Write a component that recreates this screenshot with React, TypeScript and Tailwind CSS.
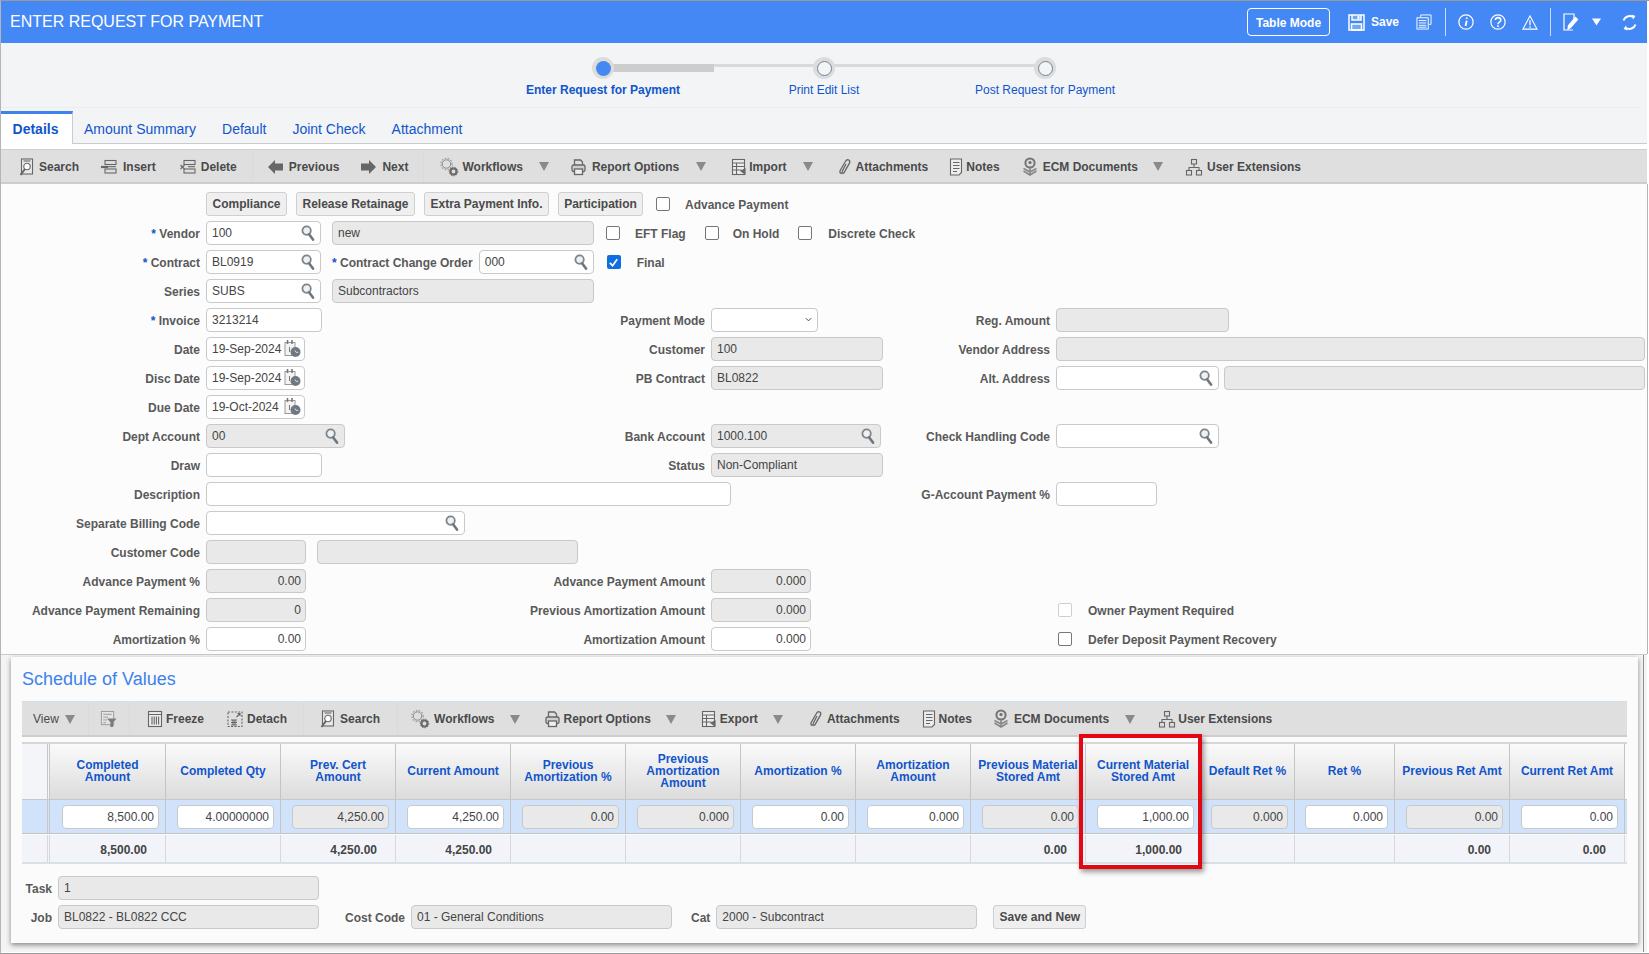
import React from 'react'

const FONT = "font-['Liberation_Sans',Arial,sans-serif]"

type IconProps = { className?: string }

const svg = (children: React.ReactNode, className = 'w-[18px] h-[18px]', stroke = '#666') => (
  <svg viewBox="0 0 18 18" fill="none" stroke={stroke} strokeWidth="1.1" className={`shrink-0 ${className}`}>
    {children}
  </svg>
)

const Magnifier = () => (
  <svg viewBox="0 0 14 16" className="w-[14px] h-[16px] shrink-0" fill="none">
    <circle cx="5.6" cy="5.6" r="4.2" stroke="#7d858c" strokeWidth="1.8" fill="#eef1f3" />
    <path d="M8.2 9.4 12 14.6" stroke="#6f777e" strokeWidth="2.6" strokeLinecap="round" />
  </svg>
)

const SearchIcon = () =>
  svg(
    <>
      <rect x="3.5" y="1" width="11" height="15" fill="#e9e9e9" />
      <path d="M5.5 3h7" />
      <circle cx="9" cy="8.5" r="3.2" fill="#fff" />
      <path d="M7 11 2.5 17" strokeWidth="2" />
    </>,
  )
const InsertIcon = () =>
  svg(
    <>
      <rect x="5" y="2.5" width="11" height="4" />
      <rect x="5" y="11" width="11" height="4" />
      <path d="M5 8.7h11" />
      <path d="M1 9h7" strokeWidth="2.2" />
    </>,
  )
const DeleteIcon = () =>
  svg(
    <>
      <rect x="5" y="2.5" width="11" height="4" />
      <rect x="5" y="11" width="11" height="4" />
      <path d="M9 8.7h7" />
      <path d="m1.5 7 4 4m0-4-4 4" />
    </>,
  )
const ArrowLeft = () => (
  <svg viewBox="0 0 15 14" className="w-[15px] h-[14px] shrink-0">
    <path d="M0 7 7 0v3.5h8v7H7V14z" fill="#666" />
  </svg>
)
const ArrowRight = () => (
  <svg viewBox="0 0 15 14" className="w-[15px] h-[14px] shrink-0">
    <path d="M15 7 8 0v3.5H0v7h8V14z" fill="#666" />
  </svg>
)
const GearsIcon = () => (
  <svg viewBox="0 0 20 20" className="w-[20px] h-[20px] shrink-0" fill="none">
    <circle cx="7.5" cy="7" r="4.2" stroke="#8b8b8b" strokeWidth="1" />
    <circle cx="7.5" cy="7" r="5.6" stroke="#a5a5a5" strokeWidth="1.4" strokeDasharray="1.6 1.4" />
    <circle cx="14.5" cy="14.5" r="3" stroke="#6b6b6b" strokeWidth="2.2" />
    <circle cx="14.5" cy="14.5" r="4.3" stroke="#6b6b6b" strokeWidth="1" strokeDasharray="1.4 1.2" />
  </svg>
)
const PrinterIcon = () => (
  <svg viewBox="0 0 15 18" className="w-[15px] h-[18px] shrink-0" fill="none" stroke="#666" strokeWidth="1.3">
    <path d="M3.5 7V2h6l2 2v3" />
    <rect x="1" y="7" width="13" height="6.5" rx="1.5" fill="#cfcfcf" />
    <rect x="3.5" y="11" width="8" height="5.5" fill="#efefef" />
  </svg>
)
const ImportIcon = () =>
  svg(
    <>
      <rect x="2.5" y="1.5" width="12" height="15" fill="#ececec" />
      <path d="M2.5 5h12M2.5 8.5h12M2.5 12h9M6.5 5v11" />
      <path d="m11 13 4-2v5z" fill="#666" />
    </>,
  )
const ExportIcon = ImportIcon
const ClipIcon = () =>
  svg(
    <path d="M5.5 15.5c-1.6 0-2-1.6-1.3-3l5.2-9c.8-1.5 2.2-2.2 3.4-1.5s1.2 2.2.4 3.7l-5 8.6c-.5.9-1.3 1.2-1.8.9-.6-.3-.6-1-.1-1.9L10 6" strokeWidth="1.3" />,
  )
const NotesIcon = () => (
  <svg viewBox="0 0 14 18" className="w-[14px] h-[18px] shrink-0" fill="none" stroke="#666" strokeWidth="1.1">
    <path d="M1.5 1h11v13.5L10 17H1.5z" fill="#ececec" />
    <path d="M4 4.5h6.5M4 7.5h6.5M4 10.5h6.5M4 13.5h4" />
  </svg>
)
const EcmIcon = () => (
  <svg viewBox="0 0 16 20" className="w-[16px] h-[20px] shrink-0" fill="none">
    <circle cx="8" cy="6" r="4.6" stroke="#757575" strokeWidth="2" fill="#dcdcdc" />
    <circle cx="8" cy="5.5" r="1.6" fill="#6e6e6e" />
    <path d="M8 11v7M1.5 11.5 8 15l6.5-3.5M1.5 14 8 18l6.5-4" stroke="#888" strokeWidth="1.6" />
  </svg>
)
const TreeIcon = () =>
  svg(
    <>
      <rect x="6.5" y="1.5" width="5" height="4.5" />
      <rect x="1.5" y="12.5" width="5" height="4.5" />
      <rect x="11.5" y="12.5" width="5" height="4.5" />
      <path d="M9 6v3.5M4 12.5v-3h10v3" />
    </>,
  )
const FilterIcon = () => (
  <svg viewBox="0 0 18 18" className="w-[17px] h-[18px] shrink-0" fill="none">
    <rect x="1.5" y="1" width="13" height="14" stroke="#999" fill="#e4e4e4" />
    <path d="M3.5 4h9M3.5 7h5M3.5 10h4M3.5 13h3" stroke="#999" />
    <path d="M7.5 8.5h10l-3.5 4v5h-3v-5z" fill="#7c7c7c" />
  </svg>
)
const FreezeIcon = () =>
  svg(
    <>
      <rect x="2.5" y="1.5" width="13" height="15" fill="#ececec" />
      <path d="M2.5 4.5h13M6 6.5v8M8.2 6.5v8M10.4 6.5v8M12.6 6.5v8" />
    </>,
  )
const DetachIcon = () =>
  svg(
    <>
      <rect x="2" y="2" width="14" height="14.5" strokeDasharray="2 1.4" />
      <path d="M5 10h6M5 12.5h6M5 15h6M7 10v5M9 10v5M10.5 7 14 3.5M11.5 3.5H14V6" />
    </>,
  )

const Caret = ({ className = '' }: IconProps) => (
  <svg viewBox="0 0 10 9" className={`w-[10px] h-[9px] shrink-0 ${className}`}>
    <path d="M0 0h10L5 9z" fill="#8a8a8a" />
  </svg>
)

const CalendarClock = () => (
  <svg viewBox="0 0 17 19" className="w-[17px] h-[19px] shrink-0" fill="none">
    <rect x="1" y="3.5" width="10" height="13" stroke="#9a9a9a" fill="#f3f3f3" />
    <path d="M3.5 1v4M8 1v4" stroke="#777" strokeWidth="1.6" />
    <path d="M5.5 8v5" stroke="#777" />
    <circle cx="11.5" cy="13" r="5" fill="#6f7880" />
    <path d="M11 11.5 12 13.3h2.3" stroke="#d9d9d9" />
  </svg>
)

const Label = ({ children, req, className = '' }: { children: React.ReactNode; req?: boolean; className?: string }) => (
  <label className={`block shrink-0 mt-[2px] text-right text-[12px] font-bold text-[#595959] whitespace-nowrap ${className}`}>
    {req ? <span className="text-[#1155cc]">* </span> : null}
    {children}
  </label>
)

const Txt = ({ children, className = '' }: { children: React.ReactNode; className?: string }) => (
  <span className={`mt-[2px] text-[12px] font-bold text-[#595959] whitespace-nowrap ${className}`}>{children}</span>
)

const Field = ({
  className = '',
  value = '',
  gray,
  right,
  search,
  date,
}: {
  className?: string
  value?: string
  gray?: boolean
  right?: boolean
  search?: boolean
  date?: boolean
}) => (
  <div
    className={`h-[24px] shrink-0 border border-[#c9c9c9] rounded-[4px] flex items-center text-[12px] text-[#444] whitespace-nowrap ${
      gray ? 'bg-[#e9e9e9]' : 'bg-white'
    } ${right ? 'justify-end pl-[5px] pr-[4px]' : 'justify-between px-[5px]'} ${className}`}
  >
    <span>{value}</span>
    {search ? <Magnifier /> : null}
    {date ? <CalendarClock /> : null}
  </div>
)

const Check = ({ checked, faint, className = '' }: { checked?: boolean; faint?: boolean; className?: string }) =>
  checked ? (
    <div className={`w-[14px] h-[14px] mt-[1px] shrink-0 rounded-[2px] bg-[#0f6fe0] flex items-center justify-center ${className}`}>
      <svg viewBox="0 0 12 12" className="w-[11px] h-[11px]" fill="none">
        <path d="M2 6.5 5 9.5 10 2.5" stroke="#fff" strokeWidth="1.9" />
      </svg>
    </div>
  ) : (
    <div
      className={`w-[14px] h-[14px] mt-[1px] shrink-0 rounded-[2px] bg-white border ${
        faint ? 'border-[#cfcfcf]' : 'border-[#767676]'
      } ${className}`}
    />
  )

const Btn = ({ children, className = '' }: { children: React.ReactNode; className?: string }) => (
  <div
    className={`h-[24px] flex items-center justify-center shrink-0 rounded-[3px] border border-[#cfcfcf] bg-[#efefef] text-[12px] font-bold text-[#4a4a4a] whitespace-nowrap ${className}`}
  >
    {children}
  </div>
)

const Item = ({
  icon,
  text,
  className = '',
  gap = 'gap-[5px]',
}: {
  icon?: React.ReactNode
  text: string
  className?: string
  gap?: string
}) => (
  <div className={`flex items-center shrink-0 ${gap} ${className}`}>
    {icon}
    <span className="text-[12px] font-bold text-[#4a4a4a] whitespace-nowrap">{text}</span>
  </div>
)

const Row = ({ children }: { children: React.ReactNode }) => (
  <div className="grid grid-cols-[520px_395px_1fr] h-[29px] items-center">{children}</div>
)

const A = ({ label, req, children, span }: { label?: string; req?: boolean; children: React.ReactNode; span?: string }) => (
  <div className={`flex items-center gap-[6px] ${span ?? ''}`}>
    <Label req={req} className="w-[199px]">
      {label}
    </Label>
    {children}
  </div>
)
const B = ({ label, children }: { label?: string; children?: React.ReactNode }) => (
  <div className="flex items-center gap-[6px] col-start-2">
    <Label className="w-[184px]">{label}</Label>
    {children}
  </div>
)
const C = ({ label, children }: { label?: string; children?: React.ReactNode }) => (
  <div className="flex items-center gap-[6px] col-start-3">
    <Label className="w-[134px]">{label}</Label>
    {children}
  </div>
)
const Opt = ({ text, faint, className = '' }: { text: string; faint?: boolean; className?: string }) => (
  <div className={`flex items-center gap-[16px] col-start-3 pl-[142px] ${className}`}>
    <Check faint={faint} />
    <Txt>{text}</Txt>
  </div>
)

type Col = {
  title: React.ReactNode
  w: string
  inW: string
  val: string
  gray?: boolean
  total?: string
}

const COLS: Col[] = [
  { title: <>Completed<br />Amount</>, w: 'w-[116px]', inW: 'w-[97px]', val: '8,500.00', total: '8,500.00' },
  { title: 'Completed Qty', w: 'w-[115px]', inW: 'w-[97px]', val: '4.00000000' },
  { title: <>Prev. Cert<br />Amount</>, w: 'w-[115px]', inW: 'w-[97px]', val: '4,250.00', gray: true, total: '4,250.00' },
  { title: 'Current Amount', w: 'w-[115px]', inW: 'w-[97px]', val: '4,250.00', total: '4,250.00' },
  { title: <>Previous<br />Amortization %</>, w: 'w-[115px]', inW: 'w-[97px]', val: '0.00', gray: true },
  { title: <>Previous<br />Amortization<br />Amount</>, w: 'w-[115px]', inW: 'w-[97px]', val: '0.000', gray: true },
  { title: 'Amortization %', w: 'w-[115px]', inW: 'w-[97px]', val: '0.00' },
  { title: <>Amortization<br />Amount</>, w: 'w-[115px]', inW: 'w-[97px]', val: '0.000' },
  { title: <>Previous Material<br />Stored Amt</>, w: 'w-[115px]', inW: 'w-[97px]', val: '0.00', gray: true, total: '0.00' },
  { title: <>Current Material<br />Stored Amt</>, w: 'w-[115px]', inW: 'w-[97px]', val: '1,000.00', total: '1,000.00' },
  { title: 'Default Ret %', w: 'w-[94px]', inW: 'w-[77px]', val: '0.000', gray: true },
  { title: 'Ret %', w: 'w-[100px]', inW: 'w-[83px]', val: '0.000' },
  { title: 'Previous Ret Amt', w: 'w-[115px]', inW: 'w-[97px]', val: '0.00', gray: true, total: '0.00' },
  { title: 'Current Ret Amt', w: 'w-[115px]', inW: 'w-[97px]', val: '0.00', total: '0.00' },
]

const Step = ({ label, active }: { label: string; active?: boolean }) => (
  <div className="relative w-[221px] flex flex-col items-center">
    <div className="w-[22px] h-[22px] rounded-full bg-[#dcdcdc] flex items-center justify-center z-10">
      <div
        className={`rounded-full ${
          active ? 'w-[15px] h-[15px] bg-[#4488f0]' : 'w-[15px] h-[15px] bg-[#f2f4f6] border border-[#6f8496]'
        }`}
      />
    </div>
    <span className={`mt-[2px] text-[12px] text-[#1155cc] whitespace-nowrap ${active ? 'font-bold' : ''}`}>{label}</span>
  </div>
)

export default function App() {
  return (
    <div className={`${FONT} relative w-[1649px] h-[954px] overflow-hidden bg-white border-t border-[#9a9a9a] border-b border-l border-l-[#b5b5b5]`}>
      {/* title bar */}
      <div className="h-[42px] mr-[2px] bg-[#4488f5] flex items-center text-white">
        <div className="ml-[9px] text-[16px] whitespace-nowrap">ENTER REQUEST FOR PAYMENT</div>
        <div className="ml-auto flex items-center h-full">
          <div className="w-[83px] h-[28px] pt-px border border-white rounded-[4px] flex items-center justify-center text-[12px] font-bold">
            Table Mode
          </div>
          <svg viewBox="0 0 17 17" className="w-[17px] h-[17px] ml-[18px]" fill="none" stroke="#fff" strokeWidth="1.5">
            <path d="M1 1h15v15H1z" />
            <path d="M4 1v5h9V1M3.5 10h10v6h-10z" fill="#fff" fillOpacity=".25" />
            <path d="M9.5 2h2v3h-2z" fill="#fff" stroke="none" />
          </svg>
          <span className="ml-[6px] w-[27px] text-[12px] font-bold">Save</span>
          <svg viewBox="0 0 17 17" className="w-[16px] h-[16px] ml-[18px]" fill="none" stroke="#fff" strokeWidth="1">
            <path d="M5 3.5V1h11v10h-2" />
            <rect x="1" y="4" width="12" height="12" />
            <path d="M3 7h8M3 9.5h8M3 12h8M3 14h8" />
          </svg>
          <div className="w-px h-[28px] bg-[#c8dcfb] ml-[13px]" />
          <svg viewBox="0 0 17 17" className="w-[16px] h-[16px] ml-[12px]" fill="none" stroke="#fff">
            <circle cx="8.5" cy="8.5" r="7.6" strokeWidth="1.3" />
            <path d="M9.3 7 8 12.8M9.5 3.7l-.3 1.5" strokeWidth="2" />
          </svg>
          <svg viewBox="0 0 17 17" className="w-[16px] h-[16px] ml-[16px]" fill="none" stroke="#fff">
            <circle cx="8.5" cy="8.5" r="7.6" strokeWidth="1.3" />
            <path d="M5.7 6.5c0-3.6 5.8-3.6 5.8 0 0 2.3-3 2-3 4.3M8.5 12v1.8" strokeWidth="1.7" />
          </svg>
          <svg viewBox="0 0 17 16" className="w-[16px] h-[15px] ml-[16px]" fill="none" stroke="#fff">
            <path d="M8.5 1 16 15H1z" strokeWidth="1.2" />
            <path d="M8.5 5.5v5.5M8.5 12v1.7" strokeWidth="1.4" />
          </svg>
          <div className="w-px h-[28px] bg-[#c8dcfb] ml-[12px]" />
          <svg viewBox="0 0 16 18" className="w-[16px] h-[18px] ml-[12px]" fill="none" stroke="#fff" strokeWidth="1.2">
            <path d="M10 17H1V1h10v6" />
            <path d="m5 16 .5-3.5 7-8 2 2-7 8z" fill="#fff" />
          </svg>
          <svg viewBox="0 0 10 8" className="w-[9px] h-[8px] ml-[13px]">
            <path d="M0 0h10L5 8z" fill="#fff" />
          </svg>
          <svg viewBox="0 0 17 17" className="w-[17px] h-[17px] ml-[20px] mr-[9px]" fill="none" stroke="#fff" strokeWidth="2">
            <path d="M2.5 6.5A6.5 6.5 0 0 1 12 3M14.500 10.500A6.500 6.500 0 0 1 5 14" />
            <path d="M10.500 .5 14.500 2 12 5.500zM6.500 16.500 2.500 15 5 11.500z" fill="#fff" stroke="none" />
          </svg>
        </div>
      </div>

      {/* workflow steps */}
      <div className="h-[68px] mr-[2px] bg-[#f2f4f6] relative">
        <div className="ml-[491.5px] pt-[14px] flex relative">
          <Step label="Enter Request for Payment" active />
          <Step label="Print Edit List" />
          <Step label="Post Request for Payment" />
          <div className="absolute left-[110px] top-[21px] w-[440px] h-[3px] bg-[#dadada]" />
          <div className="absolute left-[110px] top-[21px] w-[111px] h-[8px] bg-[#cdcdcd]" />
        </div>
        <div className="absolute left-0 right-[8px] bottom-[3px] h-px bg-[#ebedef]" />
      </div>

      {/* tabs */}
      <div className="h-[33px] mr-[2px] bg-[#f2f4f6] flex items-stretch border-b border-[#c9cbcd] text-[14px] text-[#1155cc]">
        <div className="w-[72px] h-[33px] pr-[2px] pt-px border-t-[3px] border-t-[#3e83ea] border-r border-r-[#c9cbcd] bg-white flex items-center justify-center font-bold">
          Details
        </div>
        <div className="ml-[11px] flex items-center pt-[4px] whitespace-nowrap">Amount Summary</div>
        <div className="ml-[26px] flex items-center pt-[4px]">Default</div>
        <div className="ml-[26px] flex items-center pt-[4px] whitespace-nowrap">Joint Check</div>
        <div className="ml-[26px] flex items-center pt-[4px]">Attachment</div>
      </div>
      <div className="h-[5px] bg-white" />

      {/* main toolbar */}
      <div className="h-[35px] mr-[2px] pt-[1px] bg-[#dfdfdf] border-t border-[#cfcfcf] border-b-2 border-b-[#cdcdcd] flex items-center">
        <Item icon={<SearchIcon />} text="Search" className="ml-[17px]" gap="gap-[3px]" />
        <Item icon={<InsertIcon />} text="Insert" className="ml-[21px]" />
        <Item icon={<DeleteIcon />} text="Delete" className="ml-[23px]" gap="gap-[4px]" />
        <div className="w-px self-stretch bg-[#d6dbe0] ml-[15px]" />
        <Item icon={<ArrowLeft />} text="Previous" className="ml-[15px]" gap="gap-[6px]" />
        <Item icon={<ArrowRight />} text="Next" className="ml-[22px]" gap="gap-[6px]" />
        <div className="w-px self-stretch bg-[#d6dbe0] ml-[15px]" />
        <Item icon={<GearsIcon />} text="Workflows" className="ml-[15px]" gap="gap-[3px]" />
        <Caret className="ml-[16px]" />
        <Item icon={<PrinterIcon />} text="Report Options" className="ml-[22px]" gap="gap-[6px]" />
        <Caret className="ml-[17px]" />
        <Item icon={<ImportIcon />} text="Import" className="ml-[24px]" gap="gap-[1px]" />
        <Caret className="ml-[16px]" />
        <Item icon={<ClipIcon />} text="Attachments" className="ml-[23px]" gap="gap-[2px]" />
        <Item icon={<NotesIcon />} text="Notes" className="ml-[21px]" gap="gap-[3px]" />
        <Item icon={<EcmIcon />} text="ECM Documents" className="ml-[22px]" />
        <Caret className="ml-[15px]" />
        <Item icon={<TreeIcon />} text="User Extensions" className="ml-[22px]" gap="gap-[4px]" />
      </div>

      {/* form */}
      <div className="h-[470px] mr-[1px] border-r border-[#b5b5b5] bg-[#fcfcfc] pt-[5px]">
        <Row>
          <div className="col-span-3 flex items-center pl-[205px]">
            <Btn className="w-[81px]">Compliance</Btn>
            <Btn className="w-[119px] ml-[9px]">Release Retainage</Btn>
            <Btn className="w-[125px] ml-[9px]">Extra Payment Info.</Btn>
            <Btn className="w-[85px] ml-[9px]">Participation</Btn>
            <Check className="ml-[13px]" />
            <Txt className="ml-[15px]">Advance Payment</Txt>
          </div>
        </Row>
        <Row>
          <A label="Vendor" req span="col-span-3">
            <Field className="w-[115px]" value="100" search />
            <Field className="w-[262px] ml-[5px]" value="new" gray />
            <Check className="ml-[6px]" />
            <Txt className="ml-[9px]">EFT Flag</Txt>
            <Check className="ml-[13px]" />
            <Txt className="ml-[8px]">On Hold</Txt>
            <Check className="ml-[13px]" />
            <Txt className="ml-[10px]">Discrete Check</Txt>
          </A>
        </Row>
        <Row>
          <A label="Contract" req span="col-span-3">
            <Field className="w-[115px]" value="BL0919" search />
            <Label req className="ml-[5px]">Contract Change Order</Label>
            <Field className="w-[115px]" value="000" search />
            <Check checked className="ml-[7px]" />
            <Txt className="ml-[10px]">Final</Txt>
          </A>
        </Row>
        <Row>
          <A label="Series" span="col-span-3">
            <Field className="w-[115px]" value="SUBS" search />
            <Field className="w-[262px] ml-[5px]" value="Subcontractors" gray />
          </A>
        </Row>
        <Row>
          <A label="Invoice" req>
            <Field className="w-[116px]" value="3213214" />
          </A>
          <B label="Payment Mode">
            <div className="w-[107px] h-[24px] bg-white border border-[#c9c9c9] rounded-[4px] flex items-center justify-end pr-[5px]">
              <svg viewBox="0 0 8 5" className="w-[7px] h-[5px]" fill="none">
                <path d="m1 1 3 3 3-3" stroke="#444" strokeWidth="1.1" />
              </svg>
            </div>
          </B>
          <C label="Reg. Amount">
            <Field className="w-[173px]" gray />
          </C>
        </Row>
        <Row>
          <A label="Date">
            <Field className="w-[99px] !pr-[3px]" value="19-Sep-2024" date />
          </A>
          <B label="Customer">
            <Field className="w-[172px]" value="100" gray />
          </B>
          <C label="Vendor Address">
            <Field className="w-[589px]" gray />
          </C>
        </Row>
        <Row>
          <A label="Disc Date">
            <Field className="w-[99px] !pr-[3px]" value="19-Sep-2024" date />
          </A>
          <B label="PB Contract">
            <Field className="w-[172px]" value="BL0822" gray />
          </B>
          <C label="Alt. Address">
            <Field className="w-[163px]" search />
            <Field className="w-[421px] -ml-px" gray />
          </C>
        </Row>
        <Row>
          <A label="Due Date">
            <Field className="w-[99px] !pr-[3px]" value="19-Oct-2024" date />
          </A>
        </Row>
        <Row>
          <A label="Dept Account">
            <Field className="w-[139px]" value="00" gray search />
          </A>
          <B label="Bank Account">
            <Field className="w-[170px]" value="1000.100" gray search />
          </B>
          <C label="Check Handling Code">
            <Field className="w-[163px]" search />
          </C>
        </Row>
        <Row>
          <A label="Draw">
            <Field className="w-[116px]" />
          </A>
          <B label="Status">
            <Field className="w-[172px]" value="Non-Compliant" gray />
          </B>
        </Row>
        <Row>
          <A label="Description" span="col-span-2">
            <Field className="w-[525px]" />
          </A>
          <C label="G-Account Payment %">
            <Field className="w-[101px]" />
          </C>
        </Row>
        <Row>
          <A label="Separate Billing Code">
            <Field className="w-[259px]" search />
          </A>
        </Row>
        <Row>
          <A label="Customer Code">
            <Field className="w-[100px]" gray />
            <Field className="w-[261px] ml-[5px]" gray />
          </A>
        </Row>
        <Row>
          <A label="Advance Payment %">
            <Field className="w-[100px]" value="0.00" gray right />
          </A>
          <B label="Advance Payment Amount">
            <Field className="w-[100px]" value="0.000" gray right />
          </B>
        </Row>
        <Row>
          <A label="Advance Payment Remaining">
            <Field className="w-[100px]" value="0" gray right />
          </A>
          <B label="Previous Amortization Amount">
            <Field className="w-[100px]" value="0.000" gray right />
          </B>
          <Opt text="Owner Payment Required" faint />
        </Row>
        <Row>
          <A label="Amortization %">
            <Field className="w-[100px]" value="0.00" right />
          </A>
          <B label="Amortization Amount">
            <Field className="w-[100px]" value="0.000" right />
          </B>
          <Opt text="Defer Deposit Payment Recovery" />
        </Row>
      </div>

      {/* schedule of values */}
      <div className="h-[298px] bg-[#f4f4f4] border-t border-[#c9c9c9] mr-[2px] pt-[2px] relative">
        <div className="absolute right-[3px] top-0 bottom-0 w-px bg-[#8f8f8f]" />
        <div className="ml-[10px] w-[1627px] h-[286px] bg-[#fbfbfb] shadow-[0_2px_5px_rgba(0,0,0,0.45)] pl-[11px]">
          <div className="h-[44px] flex items-center text-[18px] text-[#3d82ec] pt-[1px]">Schedule of Values</div>
          <div className="w-[1605px] h-[36px] pt-[1px] bg-[#dfdfdf] border-t border-[#cfdff0] border-b-2 border-b-[#cdcdcd] flex items-center">
            <span className="ml-[11px] w-[25px] text-[12px] text-[#4a4a4a]">View</span>
            <Caret className="ml-[7px]" />
            <div className="w-px self-stretch bg-[#d6dbe0] ml-[13px]" />
            <div className="ml-[11px]">
              <FilterIcon />
            </div>
            <div className="w-px self-stretch bg-[#d6dbe0] ml-[12px]" />
            <Item icon={<FreezeIcon />} text="Freeze" className="ml-[16px]" gap="gap-[2px]" />
            <Item icon={<DetachIcon />} text="Detach" className="ml-[22px]" gap="gap-[3px]" />
            <div className="w-px self-stretch bg-[#d6dbe0] ml-[16px]" />
            <Item icon={<SearchIcon />} text="Search" className="ml-[15px]" gap="gap-[3px]" />
            <div className="w-px self-stretch bg-[#d6dbe0] ml-[17px]" />
            <Item icon={<GearsIcon />} text="Workflows" className="ml-[12px]" gap="gap-[4px]" />
            <Caret className="ml-[15px]" />
            <Item icon={<PrinterIcon />} text="Report Options" className="ml-[25px]" gap="gap-[4px]" />
            <Caret className="ml-[15px]" />
            <Item icon={<ExportIcon />} text="Export" className="ml-[24px]" gap="gap-[2px]" />
            <Caret className="ml-[15px]" />
            <Item icon={<ClipIcon />} text="Attachments" className="ml-[24px]" gap="gap-[2px]" />
            <Item icon={<NotesIcon />} text="Notes" className="ml-[22px]" gap="gap-[3px]" />
            <Item icon={<EcmIcon />} text="ECM Documents" className="ml-[21px]" />
            <Caret className="ml-[16px]" />
            <Item icon={<TreeIcon />} text="User Extensions" className="ml-[23px]" gap="gap-[2px]" />
          </div>

          {/* grid */}
          <div className="mt-[5px] w-[1605px] border-t-2 border-[#d6d6d6]">
            <div className="flex h-[55px]">
              <div className="w-[28px] shrink-0 bg-[#f3f5f9] border-r-[3px] border-double border-[#c8c8c8]" />
              {COLS.map((c, i) => (
                <div
                  key={i}
                  className={`${c.w} shrink-0 pb-[1px] bg-gradient-to-b from-[#fafafa] to-[#dcdcdc] border-r border-[#c4c4c4] flex items-center justify-center text-center text-[12px] leading-[12px] font-bold text-[#1155cc] whitespace-nowrap`}
                >
                  <span>{c.title}</span>
                </div>
              ))}
            </div>
            <div className="flex h-[35px] bg-[#d1e2fb] border-t border-[#c8c8c8] border-b border-b-[#c4c4c4]">
              <div className="w-[28px] shrink-0 border-r-[3px] border-double border-[#c8c8c8]" />
              {COLS.map((c, i) => (
                <div key={i} className={`${c.w} shrink-0 border-r border-[#c4c4c4] flex items-center justify-end pr-[6px]`}>
                  <Field className={c.inW} value={c.val} gray={c.gray} right />
                </div>
              ))}
            </div>
            <div className="flex h-[29px] mt-px bg-[#f2f4f9] border-b-2 border-[#d8e0e8]">
              <div className="w-[28px] shrink-0 border-r-[3px] border-double border-[#d8d8d8]" />
              {COLS.map((c, i) => (
                <div
                  key={i}
                  className={`${c.w} shrink-0 border-r border-[#d8d8d8] flex items-center justify-end pr-[18px] pt-[3px] text-[12px] font-bold text-[#444]`}
                >
                  {c.total}
                </div>
              ))}
            </div>
          </div>

          {/* detail fields */}
          <div className="mt-[12px] flex flex-col gap-[5px]">
            <div className="flex items-center gap-[6px] pl-[3px]">
              <Txt className="w-[27px] text-right">Task</Txt>
              <Field className="w-[261px]" value="1" gray />
            </div>
            <div className="flex items-center pl-[3px]">
              <Txt className="w-[27px] text-right">Job</Txt>
              <Field className="w-[261px] ml-[6px]" value="BL0822 - BL0822 CCC" gray />
              <Txt className="ml-[26px]">Cost Code</Txt>
              <Field className="w-[261px] ml-[6px]" value="01 - General Conditions" gray />
              <Txt className="ml-[19px]">Cat</Txt>
              <Field className="w-[261px] ml-[6px]" value="2000 - Subcontract" gray />
              <Btn className="w-[93px] ml-[16px]">Save and New</Btn>
            </div>
          </div>
        </div>
      </div>

      {/* highlight box added on the screenshot */}
      <div className="absolute left-[1078px] top-[733px] w-[123px] h-[135px] border-[4px] border-[#e30613] shadow-[2px_3px_5px_rgba(0,0,0,0.4)]" />
    </div>
  )
}
